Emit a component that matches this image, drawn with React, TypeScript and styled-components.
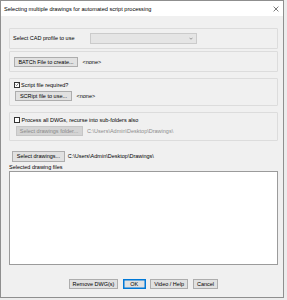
import styled, { createGlobalStyle } from 'styled-components';

const GlobalStyle = createGlobalStyle`
    body{
        margin : 0;
        background : #ececec;
        font-family : "Liberation Sans", Arial, sans-serif;
        font-size : 5.5px;
        color : #000;
    }
`;

const Window = styled.div`
    width : 284px;
    height : 298px;
    box-sizing : border-box;
    border : 1px solid #8f8f8f;
    background : #f0f0f0;
    display : flex;
    flex-direction : column;
`;

const TitleBar = styled.div`
    height : 15px;
    flex-shrink : 0;
    background : #fff;
    display : flex;
    align-items : center;
    justify-content : space-between;
    padding : 0 4px 0 3px;
    font-size : 5.6px;
`;

const Client = styled.div`
    flex : 1;
    display : flex;
    flex-direction : column;
    padding : 12px 5px 8px 8px;
    min-height : 0;
`;

const Group = styled.div<{ $pad: string; $mt?: number }>`
    border : 1px solid #dcdcdc;
    border-radius : 1px;
    padding : ${(p) => p.$pad};
    margin-top : ${(p) => p.$mt ?? 0}px;
    display : flex;
    flex-direction : column;
    gap : 3px;
`;

const Row = styled.div<{ $indent?: number; $gap?: number; $mt?: number }>`
    display : flex;
    align-items : center;
    gap : ${(p) => p.$gap ?? 4.5}px;
    margin-left : ${(p) => p.$indent ?? 0}px;
    margin-top : ${(p) => p.$mt ?? 0}px;
`;

const Label = styled.span<{ $w?: number; $muted?: boolean }>`
    width : ${(p) => (p.$w ? `${p.$w}px` : 'auto')};
    flex-shrink : 0;
    white-space : nowrap;
    color : ${(p) => (p.$muted ? '#8d8d8d' : '#000')};
`;

const Combo = styled.div`
    width : 107px;
    height : 10.5px;
    box-sizing : border-box;
    background : #e5e5e5;
    border : 1px solid #cbcbcb;
    display : flex;
    align-items : center;
    justify-content : flex-end;
    padding-right : 3px;
`;

const Button = styled.button<{ $w: number; $default?: boolean }>`
    width : ${(p) => p.$w}px;
    height : 10.5px;
    box-sizing : border-box;
    padding : 0;
    font-family : inherit;
    font-size : 5.5px;
    color : #000;
    background : #e1e1e1;
    border : 1px solid ${(p) => (p.$default ? '#0078d7' : '#adadad')};
    box-shadow : ${(p) => (p.$default ? 'inset 0 0 0 0.5px #0078d7' : 'none')};
    flex-shrink : 0;
    white-space : nowrap;

    &:disabled{
        background : #d4d4d4;
        border-color : #c6c6c6;
        color : #8a8a8a;
    }
`;

const CheckBox = styled.span`
    width : 6px;
    height : 6px;
    box-sizing : border-box;
    background : #fff;
    border : 0.8px solid #333;
    display : inline-flex;
    align-items : center;
    justify-content : center;
    flex-shrink : 0;
`;

const CheckRow = styled.label`
    display : flex;
    align-items : center;
    gap : 1.5px;
    height : 6px;
    white-space : nowrap;
`;

const FilesLabel = styled.div`
    margin-top : 2.5px;
    line-height : 7px;
`;

const FileList = styled.div`
    flex : 1;
    background : #fff;
    border : 1px solid #9b9b9b;
`;

const Footer = styled.div`
    display : flex;
    justify-content : center;
    gap : 4.5px;
    margin-top : 14px;
`;

const Check = ({ checked, label }: { checked?: boolean; label: string }) => (
    <CheckRow>
        <CheckBox>
            {checked && (
                <svg width="5" height="5" viewBox="0 0 10 10">
                    <path d="M1.5 5.2 L4 7.8 L8.8 2" fill="none" stroke="#222" strokeWidth="1.4" />
                </svg>
            )}
        </CheckBox>
        {label}
    </CheckRow>
);

const App = () => {
    return (
        <>
            <GlobalStyle />
            <Window>
                <TitleBar>
                    <span>Selecting multiple drawings for automated script processing</span>
                    <svg width="6" height="6" viewBox="0 0 10 10">
                        <path d="M1 1 L9 9 M9 1 L1 9" stroke="#222" strokeWidth="1" />
                    </svg>
                </TitleBar>
                <Client>
                    <Group $pad="4px 3px">
                        <Row $gap={0}>
                            <Label $w={77}>Select CAD profile to use</Label>
                            <Combo>
                                <svg width="4" height="3" viewBox="0 0 8 5">
                                    <path d="M1 1 L4 4 L7 1" fill="none" stroke="#666" strokeWidth="1.2" />
                                </svg>
                            </Combo>
                        </Row>
                    </Group>

                    <Group $pad="5px 4px 3.5px" $mt={2}>
                        <Row>
                            <Button $w={64}>BATCh File to create...</Button>
                            <Label>&lt;none&gt;</Label>
                        </Row>
                    </Group>

                    <Group $pad="3px 3.5px 3.5px" $mt={6}>
                        <Check checked label="Script file required?" />
                        <Row $indent={1.5}>
                            <Button $w={57}>SCRipt file to use...</Button>
                            <Label>&lt;none&gt;</Label>
                        </Row>
                    </Group>

                    <Group $pad="4px 4px 3.5px" $mt={6}>
                        <Check label="Process all DWGs, recurse into sub-folders also" />
                        <Row $indent={1.5}>
                            <Button $w={67} disabled>Select drawings folder...</Button>
                            <Label $muted>C:\Users\Admin\Desktop\Drawings\</Label>
                        </Row>
                    </Group>

                    <Row $indent={2.7} $gap={2.5} $mt={10.7}>
                        <Button $w={53.5}>Select drawings...</Button>
                        <Label>C:\Users\Admin\Desktop\Drawings\</Label>
                    </Row>

                    <FilesLabel>Selected drawing files</FilesLabel>
                    <FileList />

                    <Footer>
                        <Button $w={49.5}>Remove DWG(s)</Button>
                        <Button $w={23} $default>OK</Button>
                        <Button $w={38}>Video / Help</Button>
                        <Button $w={25.5}>Cancel</Button>
                    </Footer>
                </Client>
            </Window>
        </>
    );
};

export default App;
